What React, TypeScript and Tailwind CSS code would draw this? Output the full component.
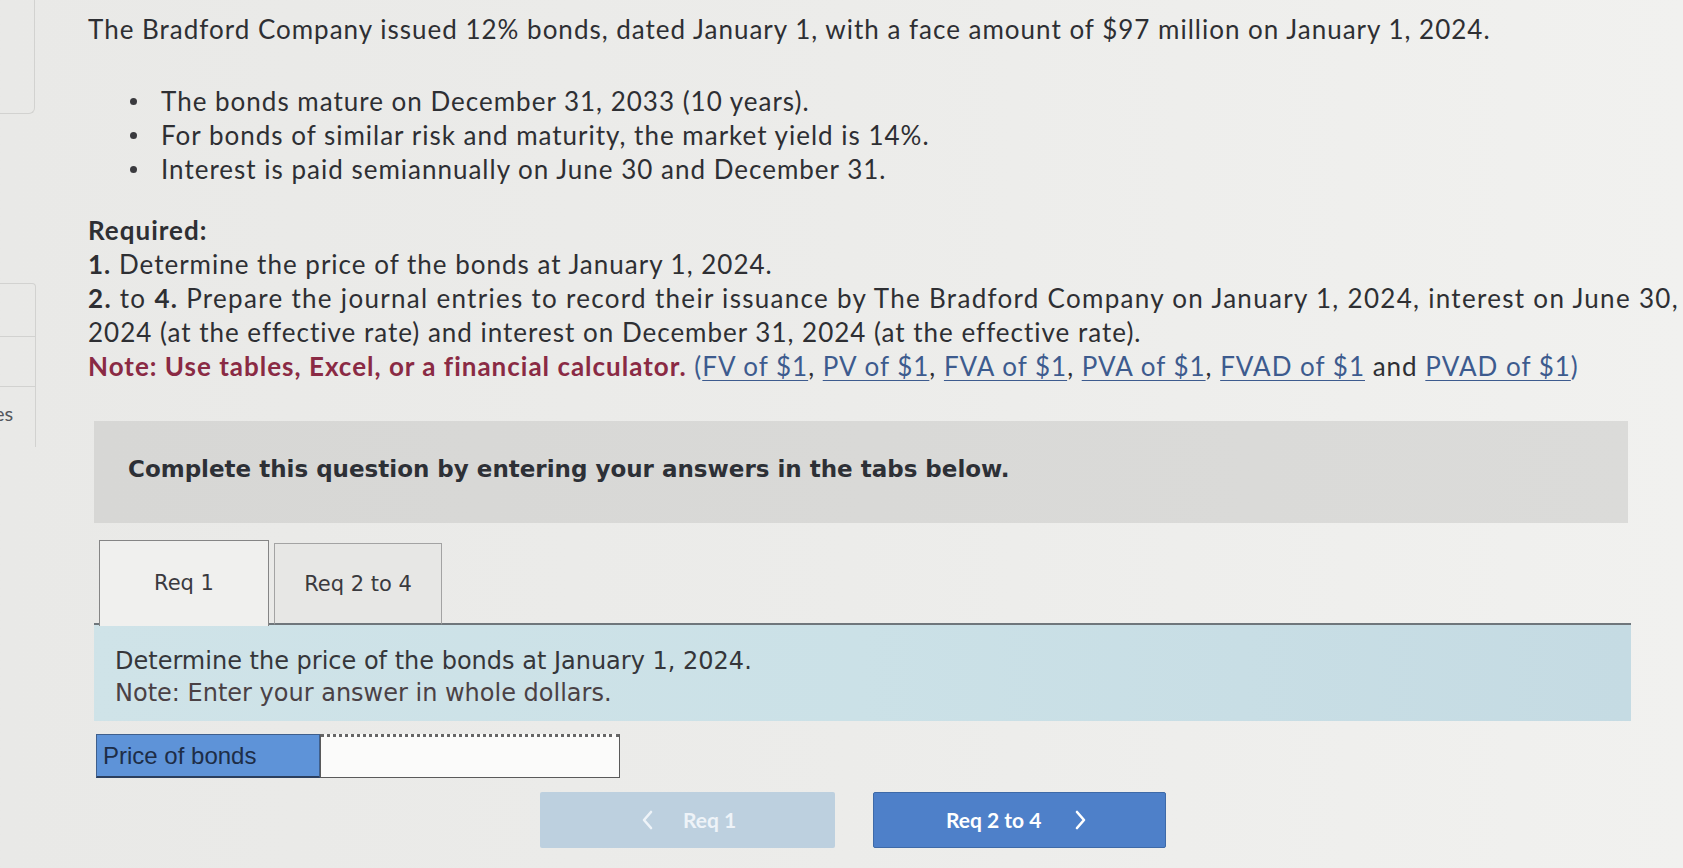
const links = ['FV of $1', 'PV of $1', 'FVA of $1', 'PVA of $1'];

const bullets = [
  'The bonds mature on December 31, 2033 (10 years).',
  'For bonds of similar risk and maturity, the market yield is 14%.',
  'Interest is paid semiannually on June 30 and December 31.',
];

function Sidebar() {
  return (
    <div className="w-[37px] shrink-0 h-full">
      <div className="h-[114px] w-[35px] rounded-br-[6px] border-r border-b border-[#d2d2d0]" />
      <div className="mt-[169px] h-[54px] w-[36px] border-t border-r border-b border-[#d2d2d0] rounded-tr-[4px]" />
      <div className="h-[50px] w-[36px] border-r border-b border-[#d2d2d0]" />
      <div className="h-[60px] w-[36px] border-r border-[#d2d2d0] overflow-hidden pt-[16px]">
        <span className="block -ml-[6px] text-[20px] leading-none text-[#55575c]">es</span>
      </div>
    </div>
  );
}

function Chevron({ dir }: { dir: 'left' | 'right' }) {
  return (
    <svg width="12" height="20" viewBox="0 0 12 20" fill="none" className="shrink-0">
      <polyline
        points={dir === 'left' ? '10,2 3,10 10,18' : '2,2 9,10 2,18'}
        stroke="currentColor"
        strokeWidth="2.6"
        strokeLinecap="round"
        strokeLinejoin="round"
      />
    </svg>
  );
}

function Tabs() {
  return (
    <div className="ml-[6px] flex items-end font-['DejaVu_Sans',sans-serif] text-[21px] text-[#3a3a3e]">
      <div className="w-[5px] border-b-[2px] border-[#6f767b]" />
      <div className="w-[170px] h-[86px] bg-[#f0f0ee] border-l border-t border-r border-[#858585] flex items-center justify-center relative z-10 -mb-[1px]">
        Req 1
      </div>
      <div className="w-[5px] border-b-[2px] border-[#6f767b]" />
      <div className="w-[168px] h-[82px] bg-[#e7e7e5] border border-[#a3a3a3] border-b-[2px] border-b-[#6f767b] flex items-center justify-center pt-[2px]">
        Req 2 to 4
      </div>
      <div className="flex-1 border-b-[2px] border-[#6f767b]" />
    </div>
  );
}

export default function App() {
  return (
    <div className="w-[1683px] h-[868px] overflow-hidden bg-gradient-to-r from-[#e9e9e7] via-[#ececea] to-[#f1f1ef] flex font-['Lato',sans-serif] text-[#2e2f33]">
      <Sidebar />
      <div className="pl-[51px] w-[1646px] shrink-0 pt-[12px]">
        <div className="text-[26px] leading-[34px] tracking-[1px]">
          <p className="whitespace-nowrap">
            The Bradford Company issued 12% bonds, dated January 1, with a face amount of $97 million on January 1, 2024.
          </p>

          <ul className="mt-[38px]">
            {bullets.map((b) => (
              <li key={b} className="flex items-center pl-[42px] whitespace-nowrap">
                <span className="w-[7px] h-[7px] shrink-0 rounded-full bg-[#3a3a3e]" />
                <span className="ml-[24px]">{b}</span>
              </li>
            ))}
          </ul>

          <div className="mt-[27px] whitespace-nowrap">
            <p className="font-bold">Required:</p>
            <p><span className="font-bold">1.</span> Determine the price of the bonds at January 1, 2024.</p>
            <p>
              <span className="tracking-[1.3px]">
                <span className="font-bold">2.</span> to <span className="font-bold">4.</span> Prepare the journal entries to record their issuance by The Bradford Company on January 1, 2024, interest on June 30,
              </span>
              <br />
              2024 (at the effective rate) and interest on December 31, 2024 (at the effective rate).
            </p>
            <p>
              <span className="font-bold text-[#8a2a44]">Note: Use tables, Excel, or a financial calculator.</span>{' '}
              <span className="text-[#3d5b8e]">(</span>
              {links.map((l) => (
                <span key={l}>
                  <a className="text-[#3d5b8e] underline underline-offset-[4px] decoration-[1px]">{l}</a>
                  <span>, </span>
                </span>
              ))}
              <a className="text-[#3d5b8e] underline underline-offset-[4px] decoration-[1px]">FVAD of $1</a>
              <span> and </span>
              <a className="text-[#3d5b8e] underline underline-offset-[4px] decoration-[1px]">PVAD of $1</a>
              <span className="text-[#3d5b8e]">)</span>
            </p>
          </div>
        </div>

        <div className="mt-[38px] ml-[6px] w-[1534px] h-[102px] bg-gradient-to-r from-[#d7d7d5] to-[#dbdbd9] pl-[34px] pt-[33px] font-['DejaVu_Sans',sans-serif] font-bold text-[23px] leading-[30px] text-[#2d3036]">
          Complete this question by entering your answers in the tabs below.
        </div>

        <div className="mt-[17px] w-[1543px]">
          <Tabs />
        </div>

        <div className="ml-[6px] w-[1537px] h-[96px] bg-gradient-to-r from-[#cfe3e8] via-[#cbe1e7] to-[#c5dbe3] pl-[21px] pt-[20px] font-['DejaVu_Sans',sans-serif] text-[24px] leading-[32px] text-[#35363a]">
          <p>Determine the price of the bonds at January 1, 2024.</p>
          <p className="text-[#4a4145]">Note: Enter your answer in whole dollars.</p>
        </div>

        <div className="mt-[13px] ml-[8px] flex h-[44px]">
          <div className="w-[224px] bg-[#5e93d8] border border-[#3f5f8c] border-b-[2px] border-b-[#2b3f5e] flex items-center pl-[6px] font-['Liberation_Sans',sans-serif] text-[24px] text-[#1d2d47]">
            Price of bonds
          </div>
          <div className="w-[300px] bg-[#fbfbfa] border border-[#5a5a5a] border-t-[3px] border-t-[#666] border-dotted [border-left-style:solid] [border-right-style:solid] [border-bottom-style:solid]" />
        </div>

        <div className="mt-[14px] ml-[452px] flex gap-[38px] font-bold text-[21px]">
          <div className="w-[295px] h-[56px] bg-[#bdd0df] rounded-[2px] flex items-center pl-[101px] gap-[30px] text-[#eef3f8]">
            <Chevron dir="left" />
            <span>Req 1</span>
          </div>
          <div className="w-[293px] h-[56px] bg-[#4e80c9] border border-[#3e6aa8] rounded-[2px] flex items-center pl-[72px] gap-[34px] text-white">
            <span>Req 2 to 4</span>
            <Chevron dir="right" />
          </div>
        </div>
      </div>
    </div>
  );
}
